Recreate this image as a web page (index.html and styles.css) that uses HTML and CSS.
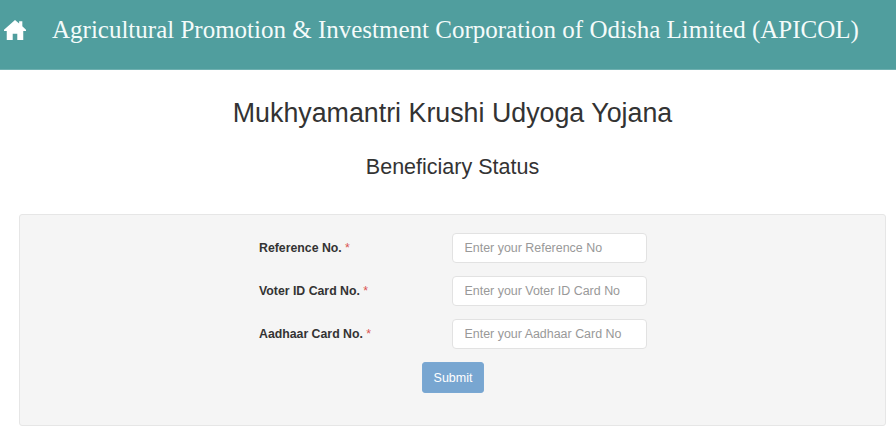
FILE: index.html
```html
<!DOCTYPE html>
<html>
<head>
  <meta charset="utf-8"/>
  <title>Beneficiary Status</title>
  <link rel="stylesheet" href="styles.css">
</head>
<body>
  <header class="top-bar">
    <a class="home-link" href="#">
      <svg class="home-icon" viewBox="0 0 24 22">
        <path d="M12 0 L16.5 4 V1.5 H20 V7 L24 10.6 V12 H21 V22 H14.5 V15 H9.5 V22 H3 V12 H0 V10.6 Z"/>
      </svg>
    </a>
    <div class="org-name">Agricultural Promotion &amp; Investment Corporation of Odisha Limited (APICOL)</div>
  </header>

  <main class="content">
    <h2 class="scheme-title">Mukhyamantri Krushi Udyoga Yojana</h2>
    <h3 class="page-title">Beneficiary Status</h3>

    <form class="well">
      <div class="form-group">
        <label for="refNo">Reference No. <span class="req">*</span></label>
        <input type="text" id="refNo" placeholder="Enter your Reference No">
      </div>
      <div class="form-group">
        <label for="voterId">Voter ID Card No. <span class="req">*</span></label>
        <input type="text" id="voterId" placeholder="Enter your Voter ID Card No">
      </div>
      <div class="form-group">
        <label for="aadhaar">Aadhaar Card No. <span class="req">*</span></label>
        <input type="text" id="aadhaar" placeholder="Enter your Aadhaar Card No">
      </div>
      <div class="button-group">
        <button type="button" class="btn-submit">Submit</button>
      </div>
    </form>
  </main>
</body>
</html>
```

FILE: styles.css
```css
html, body {
  margin: 0;
  padding: 0;
  height: 100%;
  overflow: hidden;
  background: #fff;
}

body {
  font-family: "Liberation Sans", Arial, sans-serif;
  color: #333;
}

.top-bar {
  display: flex;
  align-items: center;
  box-sizing: border-box;
  height: 70px;
  padding: 0 0 10px 4px;
  background: #509e9e;
  border-bottom: 1px solid #6fb0b0;
  white-space: nowrap;
}

.home-link {
  display: flex;
  width: 48px;
}

.home-icon {
  width: 22px;
  height: 22px;
  fill: #fff;
}

.org-name {
  font-family: "Liberation Serif", "Times New Roman", serif;
  font-size: 25px;
  color: #f4fbfa;
}

.content {
  padding: 0 10px 0 19px;
}

.scheme-title {
  margin: 28px 0 0;
  font-size: 26.8px;
  line-height: 30px;
  font-weight: 400;
  text-align: center;
}

.page-title {
  margin: 26px 0 0;
  font-size: 21.5px;
  line-height: 26px;
  font-weight: 400;
  text-align: center;
}

.well {
  box-sizing: border-box;
  height: 212px;
  margin-top: 34px;
  padding: 18px 0 0 239px;
  background: #f5f5f5;
  border: 1px solid #e6e6e6;
  border-radius: 3px;
}

.form-group {
  display: flex;
  align-items: center;
  margin-bottom: 13px;
}

.form-group label {
  width: 193px;
  font-size: 12.3px;
  font-weight: 700;
}

.req {
  color: #d9534f;
  font-weight: 400;
}

.form-group input {
  box-sizing: border-box;
  width: 195px;
  height: 30px;
  padding: 0 11.5px;
  background: #fff;
  border: 1px solid #e2e2e2;
  border-radius: 4px;
  color: #555;
  font-family: inherit;
  font-size: 12.45px;
}

.form-group input::placeholder {
  color: #999;
  opacity: 1;
}

.button-group {
  display: flex;
  margin-top: 2px;
  padding-left: 163px;
}

.btn-submit {
  width: 62px;
  height: 31px;
  padding: 0;
  background: #78a6d1;
  border: 1px solid #7aa8d3;
  border-radius: 3px;
  color: #fff;
  font-family: inherit;
  font-size: 12.5px;
}
```
